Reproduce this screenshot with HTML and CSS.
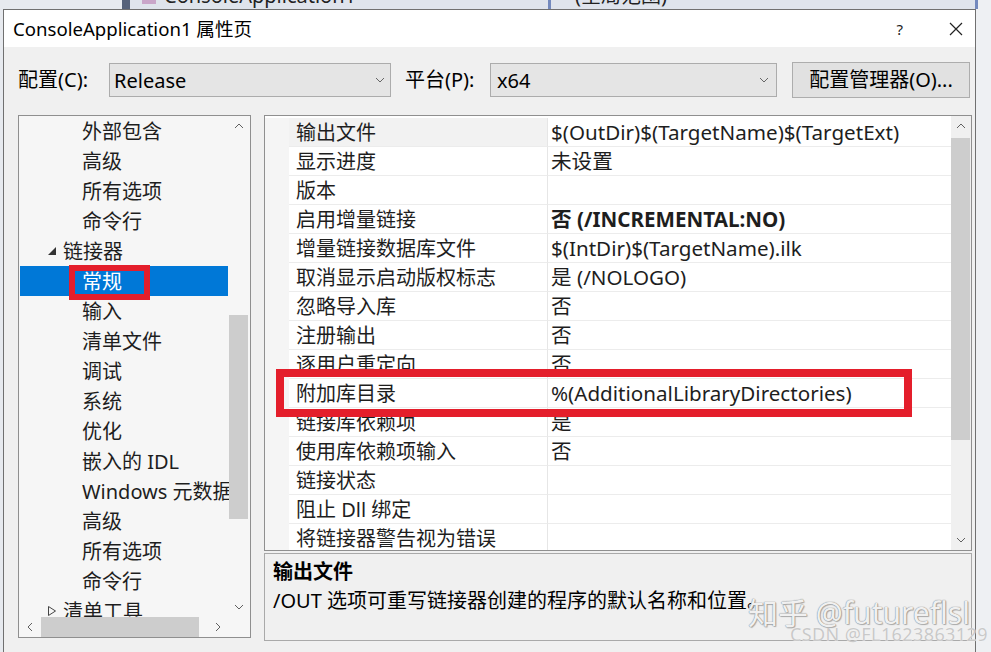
FILE: index.html
```html
<!DOCTYPE html>
<html>
<head>
<meta charset="utf-8">
<link rel="stylesheet" href="styles.css">
</head>
<body>

<!-- window behind the dialog, only its lower edge shows -->
<div class="backwin">
  <div class="bw-a"></div>
  <div class="bw-b"></div>
  <div class="bw-tab"><span class="bw-icon"></span><span class="bw-text">ConsoleApplication1</span></div>
  <div class="bw-line"></div>
  <div class="bw-tab wide"><span class="bw-text">(全局范围)</span></div>
  <div class="bw-line"></div>
  <div class="bw-rest"></div>
</div>

<div class="frame">
  <div class="edge-l"></div>

  <div class="dialog">
    <div class="titlebar">
      <span class="title">ConsoleApplication1 属性页</span>
      <span class="help">?</span>
      <span class="close-x">
        <svg width="14" height="14" viewBox="0 0 14 14"><path d="M1 1 L13 13 M13 1 L1 13" stroke="#222" stroke-width="1.2" fill="none"/></svg>
      </span>
    </div>

    <div class="toolbar">
      <span class="lbl cfg">配置(C):</span>
      <div class="select sel-cfg">
        <span>Release</span>
        <svg width="10" height="6" viewBox="0 0 10 6"><path d="M1 1 L5 5 L9 1" stroke="#666" fill="none"/></svg>
      </div>
      <span class="lbl plat">平台(P):</span>
      <div class="select sel-plat">
        <span>x64</span>
        <svg width="10" height="6" viewBox="0 0 10 6"><path d="M1 1 L5 5 L9 1" stroke="#666" fill="none"/></svg>
      </div>
      <div class="btn">配置管理器(O)...</div>
    </div>

    <div class="main">
      <!-- left tree -->
      <div class="tree">
        <div class="tree-body">
          <div class="tree-list">
            <div class="ti">外部包含</div>
            <div class="ti">高级</div>
            <div class="ti">所有选项</div>
            <div class="ti">命令行</div>
            <div class="ti parent">
              <svg class="tri" width="8" height="8" viewBox="0 0 8 8"><polygon points="8,0 8,8 0,8" fill="#333"/></svg>链接器
            </div>
            <div class="ti sel">常规<span class="mark mark-tree"></span></div>
            <div class="ti">输入</div>
            <div class="ti">清单文件</div>
            <div class="ti">调试</div>
            <div class="ti">系统</div>
            <div class="ti">优化</div>
            <div class="ti">嵌入的 IDL</div>
            <div class="ti">Windows 元数据</div>
            <div class="ti">高级</div>
            <div class="ti">所有选项</div>
            <div class="ti">命令行</div>
            <div class="ti parent">
              <svg class="tri" width="8" height="10" viewBox="0 0 8 10"><polygon points="0.5,0.5 7.5,5 0.5,9.5" fill="none" stroke="#444"/></svg>清单工具
            </div>
          </div>
          <div class="vscroll">
            <div class="arrow"><svg width="10" height="6" viewBox="0 0 10 6"><path d="M1 5 L5 1 L9 5" stroke="#606060" fill="none"/></svg></div>
            <div class="track"><div class="thumb tree-thumb"></div></div>
            <div class="arrow"><svg width="10" height="6" viewBox="0 0 10 6"><path d="M1 1 L5 5 L9 1" stroke="#606060" fill="none"/></svg></div>
          </div>
        </div>
        <div class="hscroll">
          <div class="harrow"><svg width="6" height="10" viewBox="0 0 6 10"><path d="M5 1 L1 5 L5 9" stroke="#606060" fill="none"/></svg></div>
          <div class="htrack"><div class="hthumb"></div></div>
          <div class="harrow"><svg width="6" height="10" viewBox="0 0 6 10"><path d="M1 1 L5 5 L1 9" stroke="#606060" fill="none"/></svg></div>
          <div class="corner"></div>
        </div>
      </div>

      <div class="right">
        <!-- property grid -->
        <div class="grid">
          <div class="rows">
            <div class="row first"><span class="gut"></span><span class="name">输出文件</span><span class="val">$(OutDir)$(TargetName)$(TargetExt)</span></div>
            <div class="row"><span class="gut"></span><span class="name">显示进度</span><span class="val">未设置</span></div>
            <div class="row"><span class="gut"></span><span class="name">版本</span><span class="val"></span></div>
            <div class="row"><span class="gut"></span><span class="name">启用增量链接</span><span class="val bold">否 (/INCREMENTAL:NO)</span></div>
            <div class="row"><span class="gut"></span><span class="name">增量链接数据库文件</span><span class="val">$(IntDir)$(TargetName).ilk</span></div>
            <div class="row"><span class="gut"></span><span class="name">取消显示启动版权标志</span><span class="val">是 (/NOLOGO)</span></div>
            <div class="row"><span class="gut"></span><span class="name">忽略导入库</span><span class="val">否</span></div>
            <div class="row"><span class="gut"></span><span class="name">注册输出</span><span class="val">否</span></div>
            <div class="row"><span class="gut"></span><span class="name">逐用户重定向</span><span class="val">否</span></div>
            <div class="row marked"><span class="gut"></span><span class="name">附加库目录</span><span class="val">%(AdditionalLibraryDirectories)</span><span class="mark mark-grid"></span></div>
            <div class="row"><span class="gut"></span><span class="name">链接库依赖项</span><span class="val">是</span></div>
            <div class="row"><span class="gut"></span><span class="name">使用库依赖项输入</span><span class="val">否</span></div>
            <div class="row"><span class="gut"></span><span class="name">链接状态</span><span class="val"></span></div>
            <div class="row"><span class="gut"></span><span class="name">阻止 Dll 绑定</span><span class="val"></span></div>
            <div class="row"><span class="gut"></span><span class="name">将链接器警告视为错误</span><span class="val"></span></div>
          </div>
          <div class="vscroll gscroll">
            <div class="arrow"><svg width="10" height="6" viewBox="0 0 10 6"><path d="M1 5 L5 1 L9 5" stroke="#606060" fill="none"/></svg></div>
            <div class="track"><div class="thumb grid-thumb"></div></div>
            <div class="arrow"><svg width="10" height="6" viewBox="0 0 10 6"><path d="M1 1 L5 5 L9 1" stroke="#606060" fill="none"/></svg></div>
          </div>
        </div>

        <div class="desc">
          <div class="desc-title">输出文件</div>
          <div class="desc-text">/OUT 选项可重写链接器创建的程序的默认名称和位置。</div>
        </div>
      </div>
    </div>
  </div>

  <div class="edge-r"></div>
</div>

<div class="wm-zhihu">知乎 @futureflsl</div>
<div class="wm-csdn">CSDN @FL1623863129</div>

</body>
</html>
```

FILE: styles.css
```css
* {
  box-sizing: border-box;
}

body {
  margin: 0;
  width: 991px;
  height: 652px;
  overflow: hidden;
  position: relative;
  background: #e9ecf1;
  font-family: "Noto Sans", "Noto Sans CJK SC", sans-serif;
  color: #000;
}

/* background window strip */
.backwin {
  height: 9px;
  display: flex;
  overflow: hidden;
}
.bw-a { width: 122px; background: #e7eaef; }
.bw-b { width: 8px; background: #56627a; }
.bw-tab {
  width: 418px;
  background: #dfe4ec;
  padding-left: 12px;
  display: flex;
  overflow: hidden;
}
.bw-tab.wide { width: 424px; padding-left: 24px; }
.bw-icon {
  width: 14px;
  height: 4px;
  margin-right: 8px;
  background: #c9a6c9;
}
.bw-text {
  font-size: 20px;
  line-height: 20px;
  margin-top: -14px;
  color: #222;
  white-space: nowrap;
}
.bw-line { width: 3px; background: #7389bd; }
.bw-rest { flex: 1; background: #eef0f3; }

.frame {
  display: flex;
  height: 643px;
}
.edge-l { width: 3px; background: #e7eaef; }
.edge-r { flex: 1; background: #eef0f3; }

.dialog {
  width: 973px;
  border: 1px solid #707070;
  border-bottom: none;
  background: #f0f0f0;
}

/* title bar */
.titlebar {
  height: 37px;
  background: #fff;
  display: flex;
  align-items: center;
  padding-left: 9px;
}
.title {
  font-size: 18.6px;
  flex: 1;
  margin-top: -2px;
}
.help {
  font-size: 15px;
  color: #222;
  margin-right: 46px;
}
.close-x {
  width: 14px;
  height: 14px;
  margin-right: 12px;
  display: flex;
}

/* toolbar */
.toolbar {
  height: 68px;
  display: flex;
  align-items: flex-start;
  padding: 16px 0 0 14px;
  font-size: 20px;
}
.lbl {
  height: 34px;
  line-height: 34px;
}
.cfg { width: 91px; }
.plat { width: 85px; margin-left: 14px; }
.select {
  height: 34px;
  border: 1px solid #acacac;
  background: #e5e5e5;
  display: flex;
  align-items: center;
  justify-content: space-between;
  padding: 0 5px 0 4px;
  font-size: 20px;
}
.sel-cfg { width: 282px; }
.sel-plat { width: 287px; padding-left: 6px; padding-right: 7px; }
.btn {
  width: 178px;
  height: 36px;
  margin: -1px 0 0 15px;
  border: 1px solid #adadad;
  background: #e1e1e1;
  text-align: center;
  line-height: 34px;
  font-size: 20px;
}

/* main area */
.main {
  display: flex;
  padding-left: 14px;
}

.tree {
  width: 233px;
  height: 523px;
  border: 1px solid #8f8f8f;
  background: #f6f6f6;
  display: flex;
  flex-direction: column;
  margin-right: 13px;
}
.tree-body {
  flex: 1;
  display: flex;
  overflow: hidden;
}
.tree-list {
  flex: 1;
  padding: 0 1px;
  overflow: hidden;
}
.ti {
  height: 30px;
  line-height: 31px;
  font-size: 20px;
  padding-left: 62px;
  white-space: nowrap;
  position: relative;
  color: #1e1e1e;
}
.ti.parent {
  padding-left: 28px;
  display: flex;
  align-items: center;
}
.tri {
  margin-right: 7px;
}
.ti.sel {
  background: #0078d7;
  color: #fff;
}

/* red annotation boxes */
.mark {
  position: absolute;
  border: 6px solid #e41e2b;
  z-index: 3;
}
.mark-tree {
  left: 49px;
  top: -1px;
  width: 81px;
  height: 35px;
}
.mark-grid {
  left: 11px;
  top: -10px;
  width: 636px;
  height: 48px;
  border-width: 8px;
}

.vscroll {
  width: 20px;
  display: flex;
  flex-direction: column;
  margin-right: 1px;
}
.arrow {
  height: 20px;
  display: flex;
  align-items: center;
  justify-content: center;
}
.track {
  flex: 1;
}
.thumb {
  width: 19px;
  background: #cdcdcd;
}
.tree-thumb {
  margin-top: 179px;
  height: 204px;
}

.hscroll {
  height: 20px;
  display: flex;
}
.harrow {
  width: 22px;
  display: flex;
  align-items: center;
  justify-content: center;
}
.htrack {
  width: 166px;
}
.hthumb {
  width: 158px;
  height: 20px;
  background: #cdcdcd;
}
.corner {
  flex: 1;
}

/* property grid */
.right {
  width: 708px;
}
.grid {
  height: 436px;
  border: 1px solid #8f8f8f;
  background: #fff;
  display: flex;
}
.rows {
  flex: 1;
  padding-top: 2px;
  overflow: hidden;
}
.row {
  height: 29px;
  display: flex;
  font-size: 20px;
  line-height: 29px;
  position: relative;
  color: #1e1e1e;
}
.gut {
  width: 24px;
  background: #f5f5f5;
}
.name {
  width: 259px;
  padding-left: 7px;
  border-right: 1px solid #e6e6e6;
  border-bottom: 1px solid #ececec;
  white-space: nowrap;
}
.row.first .name {
  background: #f2f2f2;
}
.val {
  flex: 1;
  padding-left: 3px;
  font-size: 20.6px;
  border-bottom: 1px solid #ececec;
  white-space: nowrap;
}
.val.bold {
  font-weight: bold;
}
.gscroll {
  background: #f0f0f0;
  margin-right: 0;
}
.grid-thumb {
  margin-top: 2px;
  height: 302px;
}

.desc {
  height: 88px;
  margin-top: 2px;
  border: 1px solid #a9a9a9;
  background: #f0f0f0;
  padding: 5px 0 0 8px;
  font-size: 20px;
}
.desc-title {
  font-weight: bold;
  line-height: 26px;
}
.desc-text {
  line-height: 32px;
}

/* watermarks */
.wm-zhihu {
  position: absolute;
  left: 748px;
  top: 589px;
  font-size: 30px;
  color: rgba(255, 255, 255, 0.9);
  text-shadow: 0 0 1px #8a8a8a, 0 0 1px #8a8a8a, 1px 1px 1px #b0b0b0;
  white-space: nowrap;
}
.wm-csdn {
  position: absolute;
  left: 790px;
  top: 622px;
  font-size: 18px;
  letter-spacing: 0.4px;
  color: #c9c9c9;
  text-shadow: 0 0 1px #fff;
  white-space: nowrap;
}
```
